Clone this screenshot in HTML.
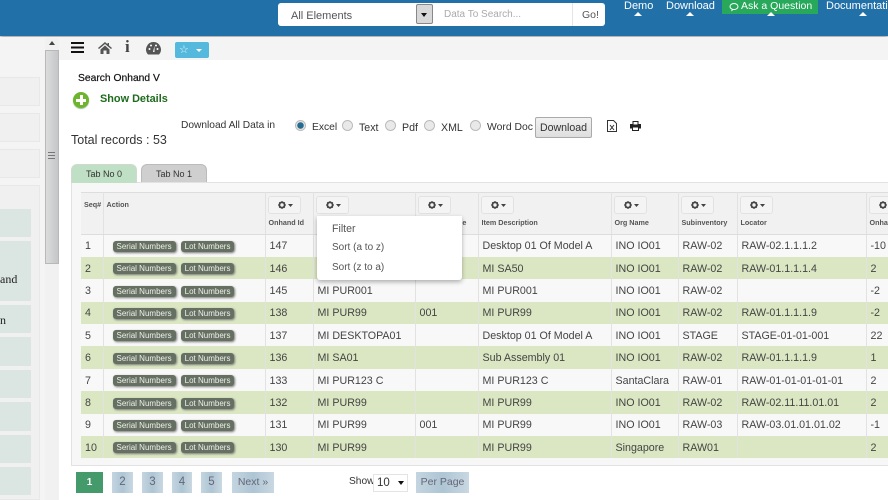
<!DOCTYPE html>
<html><head><meta charset="utf-8"><style>
html,body{margin:0;padding:0;width:888px;height:500px;overflow:hidden;background:#fff;font-family:"Liberation Sans",sans-serif;color:#333}
body{position:relative}
.a{position:absolute;white-space:nowrap}
.sb{position:absolute;background:#f0f0f0;border:1px solid #e8e8e8;box-sizing:border-box}
.gb{position:absolute;left:0;width:31px;background:#dbe6e2}
.nav{position:absolute;top:0;color:#fff;font-size:11px;line-height:12px;white-space:nowrap}
.car{position:absolute;width:0;height:0;border-left:4px solid transparent;border-right:4px solid transparent;border-bottom:4px solid #fff;top:12px}
table{position:absolute;left:81px;top:192px;border-collapse:collapse;table-layout:fixed;width:880px;font-size:10.7px;color:#444}
td,th{padding:0 0 0 4px;border-right:1px solid #e2e2e2;white-space:nowrap;overflow:hidden;text-align:left;box-sizing:border-box}
td{padding-top:1px}
th{height:42px;background:#f1f1f1;border-top:1px solid #ddd;border-bottom:1px solid #ddd;font-size:7.2px;color:#555;vertical-align:bottom;padding-bottom:7px;position:relative;padding-left:3px}
th.t{vertical-align:top;padding-top:7px}
tr.r td{height:22.4px;background:#f8f8f8}
tr.g td{height:22.4px;background:#dbe7c3}
.gear{position:absolute;left:2px;top:3px;width:33px;height:18px;background:#f4f4f4;border:1px solid #e2e2e2;border-radius:3px;box-sizing:border-box}
.gear svg{position:absolute;left:9px;top:4px}
.lb{display:inline-block;background:#667062;color:#eef0ea;font-size:8px;line-height:11px;height:11px;padding:0 4px;border-radius:3px;box-shadow:1px 1px 2px #777;margin-left:5px;vertical-align:middle}
.lb+.lb{margin-left:5px}
.pg{position:absolute;top:472px;height:21px;line-height:21px;text-align:center;font-size:11.5px;color:#667;background:linear-gradient(90deg,#c4d5e0,#aec5d4 50%,#c9d8e2);box-sizing:border-box}
.ro{position:absolute;width:11px;height:11px;border-radius:50%;top:120px;background:#e9e9e9;border:1px solid #bbb;box-sizing:border-box}
</style></head><body>
<svg width="0" height="0" style="position:absolute"><defs><g id="g"><circle cx="4" cy="4" r="2.600" fill="none" stroke="#444" stroke-width="1.800"/><path d="M4 0V1.500M4 6.500V8M0 4H1.500M6.500 4H8M1.200 1.200L2.200 2.200M5.800 5.800L6.800 6.800M1.200 6.800L2.200 5.800M5.800 2.200L6.800 1.200" stroke="#444"/><path d="M10 3H15L12.500 6Z" fill="#444"/></g></defs></svg>
<div class="a" style="left:0;top:0;width:888px;height:36px;background:#2270a8;box-shadow:0 1px 3px #888"></div>

<div class="a" style="left:278px;top:3px;width:327px;height:23px;background:#fff;border-radius:3px"></div>
<div class="a" style="left:291px;top:10px;font-size:11px;color:#555">All Elements</div>
<div class="a" style="left:416px;top:4px;width:17px;height:20px;background:#d8d8d8;border:1px solid #888;box-sizing:border-box;border-radius:2px"></div>
<div class="a" style="left:421px;top:13px;width:0;height:0;border-left:3.5px solid transparent;border-right:3.5px solid transparent;border-top:4px solid #111"></div>
<div class="a" style="left:444px;top:9px;font-size:10px;color:#aaa">Data To Search...</div>
<div class="a" style="left:572px;top:3px;width:1px;height:23px;background:#e4e4e4"></div>
<div class="a" style="left:582px;top:9px;font-size:10.500px;color:#555">Go!</div>

<div class="nav" style="left:624px">Demo</div><div class="car" style="left:634px"></div>
<div class="nav" style="left:666px">Download</div><div class="car" style="left:686px"></div>
<div class="a" style="left:722px;top:0;width:96px;height:14px;background:#27a85a"></div>
<div class="nav" style="left:741px;font-size:10.500px">Ask a Question</div>
<svg class="a" style="left:729px;top:2px" width="11" height="10" viewBox="0 0 11 10"><ellipse cx="5" cy="4.500" rx="4" ry="3" fill="none" stroke="#fff"/><path d="M3 7L2 9.500L5 7.500" fill="#fff"/></svg>
<div class="car" style="left:767px"></div>
<div class="nav" style="left:826px">Documentation</div><div class="car" style="left:859px"></div>

<div class="a" style="left:0;top:37px;width:888px;height:463px;background:#f4f4f4"></div>
<div class="a" style="left:59px;top:60px;width:829px;height:440px;background:#fff"></div>

<div class="sb" style="left:-2px;top:77px;width:42px;height:29px"></div>
<div class="sb" style="left:-2px;top:113px;width:42px;height:29px"></div>
<div class="sb" style="left:-2px;top:149px;width:42px;height:29px"></div>
<div class="sb" style="left:-2px;top:185px;width:42px;height:315px"></div>
<div class="gb" style="top:209px;height:28px"></div>
<div class="gb" style="top:241px;height:60px"></div>
<div class="gb" style="top:305px;height:28px"></div>
<div class="gb" style="top:337px;height:29px"></div>
<div class="gb" style="top:370px;height:28px"></div>
<div class="gb" style="top:402px;height:29px"></div>
<div class="gb" style="top:435px;height:28px"></div>
<div class="gb" style="top:467px;height:28px"></div>
<div class="a" style="left:0;top:272px;font:12px 'Liberation Serif',serif;color:#222">and</div>
<div class="a" style="left:0;top:313px;font:12px 'Liberation Serif',serif;color:#222">n</div>

<div class="a" style="left:45px;top:38px;width:14px;height:462px;background:#f1f1f1"></div>
<div class="a" style="left:49px;top:41px;width:0;height:0;border-left:3px solid transparent;border-right:3px solid transparent;border-bottom:4px solid #444"></div>
<div class="a" style="left:45px;top:50px;width:14px;height:214px;background:linear-gradient(90deg,#dcdcdc,#c4c6c8);border:1px solid #b8b8b8;box-sizing:border-box"></div>
<div class="a" style="left:48px;top:152px;width:7px;height:8px;background:repeating-linear-gradient(180deg,#777 0,#777 1px,transparent 1px,transparent 3px)"></div>

<div class="a" style="left:71px;top:42px;width:13px;height:11px;background:linear-gradient(#111 0 2px,transparent 2px 4.500px,#111 4.500px 6.500px,transparent 6.500px 9px,#111 9px 11px)"></div>
<svg class="a" style="left:98px;top:42px" width="14" height="12" viewBox="0 0 14 12"><path d="M7 0L0 6L1 7L7 2L13 7L14 6L11 3.500V1H9.500V2.200ZM2.500 7.500V12H5.500V8.500H8.500V12H11.500V7.500L7 3.500Z" fill="#555"/></svg>
<div class="a" style="left:125px;top:37px;font:bold 17px 'Liberation Serif',serif;color:#444">i</div>
<svg class="a" style="left:146px;top:42px" width="15" height="13" viewBox="0 0 15 13"><path d="M7.500 0A7.500 7.500 0 0 0 2 12.500H13A7.500 7.500 0 0 0 7.500 0Z" fill="#555"/><circle cx="3.500" cy="7" r="1" fill="#fff"/><circle cx="5" cy="3.500" r="1" fill="#fff"/><circle cx="10" cy="3.500" r="1" fill="#fff"/><circle cx="11.500" cy="7" r="1" fill="#fff"/><path d="M7 10L8.500 4L8.500 10Z" fill="#fff"/></svg>
<div class="a" style="left:175px;top:42px;width:34px;height:16px;background:#54b9dc;border-radius:2px"></div>
<div class="a" style="left:179px;top:43px;font-size:11px;color:#e8f6fb">☆</div>
<div class="a" style="left:196px;top:49px;width:0;height:0;border-left:3px solid transparent;border-right:3px solid transparent;border-top:3px solid #fff"></div>

<div class="a" style="left:78px;top:73px;font-size:10.300px;color:#111;-webkit-text-stroke:.2px #111">Search Onhand V</div>
<div class="a" style="left:73px;top:92px;width:16px;height:16px;border-radius:50%;background:#6cb52d;box-shadow:0 1px 1px #9b9"></div>
<div class="a" style="left:76px;top:99px;width:10px;height:3px;background:#fff"></div>
<div class="a" style="left:79.500px;top:95px;width:3px;height:10px;background:#fff"></div>
<div class="a" style="left:100px;top:93px;font-size:10.900px;font-weight:bold;color:#1e6b1e">Show Details</div>
<div class="a" style="left:181px;top:120px;font-size:10.200px;color:#333">Download All Data in</div>
<div class="a" style="left:71px;top:133px;font-size:12.500px;color:#333">Total records : 53</div>

<div class="ro" style="left:295px;background:radial-gradient(circle,#246b8f 0 3px,#e4e4e4 3.500px)"></div>
<div class="a" style="left:312px;top:122px;font-size:10.300px">Excel</div>
<div class="ro" style="left:342px"></div>
<div class="a" style="left:359px;top:122px;font-size:10.600px">Text</div>
<div class="ro" style="left:385px"></div>
<div class="a" style="left:402px;top:122px;font-size:10.600px">Pdf</div>
<div class="ro" style="left:424px"></div>
<div class="a" style="left:441px;top:122px;font-size:10.600px">XML</div>
<div class="ro" style="left:470px"></div>
<div class="a" style="left:487px;top:122px;font-size:10.400px">Word Doc</div>
<div class="a" style="left:535px;top:117px;width:57px;height:21px;background:linear-gradient(#f2f2f2,#dedede);border:1px solid #aaa;box-sizing:border-box;border-radius:2px;font-size:10.600px;line-height:20px;text-align:center">Download</div>
<svg class="a" style="left:607px;top:120px" width="10" height="12" viewBox="0 0 10 12"><path d="M.5.500H6.500L9.500 3.500V11.500H.5Z" fill="#fff" stroke="#333"/><path d="M3 5L7 10M7 5L3 10" stroke="#333"/></svg>
<svg class="a" style="left:630px;top:121px" width="11" height="10" viewBox="0 0 11 10"><path d="M2.500 0H8.500V3H11V7.500H9V10H2V7.500H0V3H2.500ZM3.500 1V3.500H7.500V1ZM3 6.500V9H8V6.500Z" fill="#222"/></svg>

<div class="a" style="left:71px;top:182px;width:830px;height:284px;background:#f7f7f7;border:1px solid #e2e2e2;box-sizing:border-box"></div>
<div class="a" style="left:71px;top:164px;width:66px;height:19px;background:#bfe0c4;border:1px solid #d0d8d0;border-bottom:0;border-radius:6px 6px 0 0;box-sizing:border-box;text-align:center;font-size:9px;line-height:18px;color:#333">Tab No 0</div>
<div class="a" style="left:141px;top:164px;width:66px;height:18px;background:#cfcfcf;border:1px solid #bbb;border-bottom:0;border-radius:6px 6px 0 0;box-sizing:border-box;text-align:center;font-size:9px;line-height:18px;color:#333">Tab No 1</div>

<table>
<colgroup><col style="width:22px"><col style="width:162px"><col style="width:48px"><col style="width:102px"><col style="width:63px"><col style="width:133px"><col style="width:67px"><col style="width:59px"><col style="width:129px"><col style="width:95px"></colgroup>
<tr>
<th class="t"><b>Seq#</b></th><th class="t"><b>Action</b></th>
<th><span class="gear"><svg width="15" height="8"><use href="#g"/></svg></span><b>Onhand Id</b></th>
<th><span class="gear"><svg width="15" height="8"><use href="#g"/></svg></span><b>Item Number</b></th>
<th><span class="gear"><svg width="15" height="8"><use href="#g"/></svg></span><b>Onhand Value</b></th>
<th><span class="gear"><svg width="15" height="8"><use href="#g"/></svg></span><b>Item Description</b></th>
<th><span class="gear"><svg width="15" height="8"><use href="#g"/></svg></span><b>Org Name</b></th>
<th><span class="gear"><svg width="15" height="8"><use href="#g"/></svg></span><b>Subinventory</b></th>
<th><span class="gear"><svg width="15" height="8"><use href="#g"/></svg></span><b>Locator</b></th>
<th><span class="gear"><svg width="15" height="8"><use href="#g"/></svg></span><b>Onhand Qty</b></th>
</tr>
<tr class="r"><td>1</td><td><span class="lb">Serial Numbers</span><span class="lb">Lot Numbers</span></td><td>147</td><td></td><td></td><td>Desktop 01 Of Model A</td><td>INO IO01</td><td>RAW-02</td><td>RAW-02.1.1.1.2</td><td>-10</td></tr>
<tr class="g"><td>2</td><td><span class="lb">Serial Numbers</span><span class="lb">Lot Numbers</span></td><td>146</td><td></td><td></td><td>MI SA50</td><td>INO IO01</td><td>RAW-02</td><td>RAW-01.1.1.1.4</td><td>2</td></tr>
<tr class="r"><td>3</td><td><span class="lb">Serial Numbers</span><span class="lb">Lot Numbers</span></td><td>145</td><td>MI PUR001</td><td></td><td>MI PUR001</td><td>INO IO01</td><td>RAW-02</td><td></td><td>-2</td></tr>
<tr class="g"><td>4</td><td><span class="lb">Serial Numbers</span><span class="lb">Lot Numbers</span></td><td>138</td><td>MI PUR99</td><td>001</td><td>MI PUR99</td><td>INO IO01</td><td>RAW-02</td><td>RAW-01.1.1.1.9</td><td>-2</td></tr>
<tr class="r"><td>5</td><td><span class="lb">Serial Numbers</span><span class="lb">Lot Numbers</span></td><td>137</td><td>MI DESKTOPA01</td><td></td><td>Desktop 01 Of Model A</td><td>INO IO01</td><td>STAGE</td><td>STAGE-01-01-001</td><td>22</td></tr>
<tr class="g"><td>6</td><td><span class="lb">Serial Numbers</span><span class="lb">Lot Numbers</span></td><td>136</td><td>MI SA01</td><td></td><td>Sub Assembly 01</td><td>INO IO01</td><td>RAW-02</td><td>RAW-01.1.1.1.9</td><td>1</td></tr>
<tr class="r"><td>7</td><td><span class="lb">Serial Numbers</span><span class="lb">Lot Numbers</span></td><td>133</td><td>MI PUR123 C</td><td></td><td>MI PUR123 C</td><td>SantaClara</td><td>RAW-01</td><td>RAW-01-01-01-01-01</td><td>2</td></tr>
<tr class="g"><td>8</td><td><span class="lb">Serial Numbers</span><span class="lb">Lot Numbers</span></td><td>132</td><td>MI PUR99</td><td></td><td>MI PUR99</td><td>INO IO01</td><td>RAW-02</td><td>RAW-02.11.11.01.01</td><td>2</td></tr>
<tr class="r"><td>9</td><td><span class="lb">Serial Numbers</span><span class="lb">Lot Numbers</span></td><td>131</td><td>MI PUR99</td><td>001</td><td>MI PUR99</td><td>INO IO01</td><td>RAW-03</td><td>RAW-03.01.01.01.02</td><td>-1</td></tr>
<tr class="g"><td>10</td><td><span class="lb">Serial Numbers</span><span class="lb">Lot Numbers</span></td><td>130</td><td>MI PUR99</td><td></td><td>MI PUR99</td><td>Singapore</td><td>RAW01</td><td></td><td>2</td></tr>
</table>

<div class="a" style="left:317px;top:216px;width:145px;height:64px;background:#fff;box-shadow:0 2px 5px rgba(0,0,0,.3);border-radius:0 0 3px 3px"></div>
<div class="a" style="left:332px;top:223px;font-size:10.600px;color:#555">Filter</div>
<div class="a" style="left:332px;top:242px;font-size:10px;color:#555">Sort (a to z)</div>
<div class="a" style="left:332px;top:262px;font-size:10px;color:#555">Sort (z to a)</div>

<div class="pg" style="left:76px;width:27px;background:#459a6c;color:#fff;font-weight:bold;font-size:10px">1</div>
<div class="pg" style="left:112px;width:21px">2</div>
<div class="pg" style="left:142px;width:21px">3</div>
<div class="pg" style="left:172px;width:20px">4</div>
<div class="pg" style="left:201px;width:21px">5</div>
<div class="pg" style="left:232px;width:42px;font-size:10.500px">Next »</div>
<div class="a" style="left:349px;top:476px;font-size:10.200px;color:#333">Show</div>
<div class="a" style="left:373px;top:474px;width:35px;height:18px;background:#fff;border:1px solid #e4e4e4;box-sizing:border-box;font-size:11.500px;line-height:16px;padding-left:3px">10</div>
<div class="a" style="left:398px;top:481px;width:0;height:0;border-left:3.500px solid transparent;border-right:3.500px solid transparent;border-top:4px solid #111"></div>
<div class="pg" style="left:416px;width:53px;font-size:10.500px">Per Page</div>
</body></html>
